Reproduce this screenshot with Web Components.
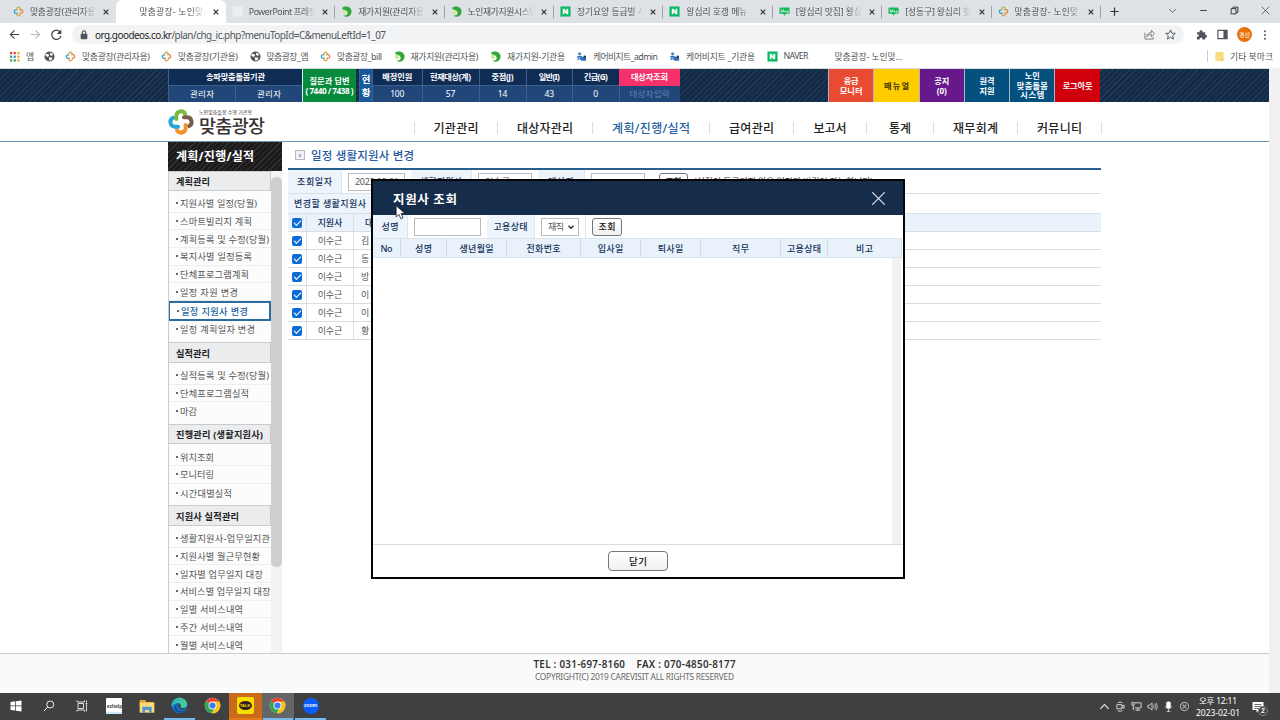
<!DOCTYPE html>
<html lang="ko">
<head>
<meta charset="utf-8">
<title>맞춤광장</title>
<style>
  html, body {
    margin: 0;
    height: 720px;
    overflow: hidden;
    background: #fff;
    font-family: "Noto Sans", "Noto Sans CJK KR", sans-serif;
    font-size: 9px;
    color: #333;
  }
</style>
</head>
<body>
<app-desktop></app-desktop>

<script>
// small base: every element gets an open root with its own styles
class Base extends HTMLElement {
  constructor() {
    super();
    this.attachShadow({ mode: "open" });
  }

  connectedCallback() {
    this.shadowRoot.innerHTML = `<style>* { box-sizing: border-box; }
      ${this.css()}</style>${this.html()}`;
  }

  css() { return ""; }
  html() { return "<slot></slot>"; }
}

// a single line of text, tracked so that it fills `w` pixels
class TextRun extends Base {
  css() {
    return `
      :host { display: block; flex: none; white-space: pre; }
      span { display: inline-block; }`;
  }
  html() { return "<span><slot></slot></span>"; }

  connectedCallback() {
    super.connectedCallback();
    const w = Number(this.getAttribute("w"));
    if (!w) return;
    const count = this.textContent.length;
    const span = this.shadowRoot.querySelector("span");
    const natural = span.getBoundingClientRect().width;
    this.style.width = `${w}px`;
    if (count > 1) span.style.letterSpacing = `${(w - natural) / (count - 1)}px`;
  }
}
customElements.define("text-run", TextRun);

const run = (text, w, cls = "") => `<text-run class="${cls}" w="${w}">${text}</text-run>`;

const chrome = `
  <circle cx="12" cy="12" r="11" fill="#fff"/>
  <path d="M12 12L2.5 6.5A11 11 0 0 1 21.5 6.5Z" fill="#e94335"/>
  <path d="M2.5 6.5A11 11 0 0 0 11 23L16.3 14.5 12 12Z" fill="#34a353"/>
  <path d="M21.5 6.5A11 11 0 0 1 11 23L16.5 14 12 6.5Z" fill="#fbc116"/>
  <circle cx="12" cy="12" r="5.6" fill="#fff"/><circle cx="12" cy="12" r="4.4" fill="#3b7ded"/>`;

const ring = (a, b, c, d, w = 3.2) => `<g fill="none" stroke-width="${w}" stroke-linecap="round">
  <path d="M8 9.500V6.500a4 4 0 0 1 7.500-1.500" stroke="${a}"/>
  <path d="M14.500 8h3a4 4 0 0 1 1.500 7.500" stroke="${b}"/>
  <path d="M16 14.500v3a4 4 0 0 1-7.500 1.500" stroke="${c}"/>
  <path d="M9.500 16H6.500a4 4 0 0 1-1.500-7.500" stroke="${d}"/></g>`;

const ICONS = {
  ring: ring("#b9b45a", "#dd8a4b", "#f0a035", "#36a3d9", 3),
  leaf: `<path d="M5 2C16-1 24 5 23 14 21 23 12 26 5 21c8 0 11-3 9-8C12 8 8 10 4 7 2 5 3 3 5 2Z" fill="#35a63a"/>
    <path d="M3 9c5-2 9 1 8 5-1 5-6 5-8 2-2-2-2-5 0-7Z" fill="#d5e8a0"/>`,
  n: `<rect x="1" y="1" width="22" height="22" fill="#08b865"/><path d="M6 18V6h4l4 6V6h4v12h-4l-4-6v6Z" fill="#fff"/>`,
  blog: `<path d="M3 3h18q2 0 2 2v10q0 2-2 2h-6l-3 4-3-4H3q-2 0-2-2V5q0-2 2-2Z" fill="#14b75a"/>
    <path d="M5 7v6M5 11h3v2H5M10 7v6M12.500 11h2.500v2h-2.500ZM17 11h3v4h-3" stroke="#fff" stroke-width="1.400" fill="none"/>`,
  blank: `<rect x="1" y="1" width="22" height="22" fill="#eceef0"/>`,
  globe: `<circle cx="12" cy="12" r="11" fill="#50555a"/><path d="M4 6l6 1 1 4-4 2-4-3ZM14 3l6 4-3 4-4-3ZM10 14l8 0-1 5-5 2Z" fill="#fff"/>`,
  care: `<circle cx="8" cy="6" r="3.500" fill="#4a86cc"/><path d="M1 13q7-5 14 0l7 2v6H12l-3-3-7 2 3-5Z" fill="#3372bd"/><circle cx="19" cy="13" r="3" fill="#263b62"/><path d="M4 13l6 1-2 4Z" fill="#87c6e8"/>`,
  apps: [0, 1, 2].map(y => [0, 1, 2].map(x =>
    `<rect x="${2 + x * 8}" y="${2 + y * 8}" width="5" height="5" fill="${["#e74535", "#e74535", "#f0ad28", "#43a255", "#4589e8", "#f0ad28", "#43a255", "#43a255", "#f0ad28"][y * 3 + x]}"/>`).join("")).join(""),
  close: `<path d="M5 5l14 14M19 5L5 19" stroke="#333" stroke-width="3.600"/>`,
  thinx: `<path d="M2 2l20 20M22 2L2 22" stroke="currentColor" stroke-width="1.800"/>`,
  plus: `<path d="M12 1v22M1 12h22" stroke="#333" stroke-width="3.200"/>`,
  down: `<path d="M3 8l9 9 9-9" stroke="#555" stroke-width="2.300" fill="none"/>`,
  pick: `<path d="M2 7l10 10L22 7" stroke="#222" stroke-width="5" fill="none"/>`,
  up: `<path d="M3 17l9-9 9 9" stroke="#ddd" stroke-width="2.600" fill="none"/>`,
  min: `<path d="M3 12h18" stroke="#333" stroke-width="2.400"/>`,
  restore: `<path d="M3 7h13v14H3ZM8 7V3h13v14h-5" stroke="#333" stroke-width="2.600" fill="none"/>`,
  back: `<path d="M22 12H4M12 3l-9 9 9 9" stroke="#444" stroke-width="2.500" fill="none"/>`,
  fwd: `<path d="M2 12h18M12 3l9 9-9 9" stroke="#b5b8bb" stroke-width="2.500" fill="none"/>`,
  reload: `<path d="M20 7a10 10 0 1 0 1.500 8" stroke="#444" stroke-width="2.700" fill="none"/><path d="M22.500 1v10h-10Z" fill="#444"/>`,
  lock: `<rect x="4" y="9" width="16" height="13" rx="2" fill="#50545a"/><path d="M8 10V6a4 4 0 0 1 8 0v4" fill="none" stroke="#50545a" stroke-width="2.600"/>`,
  share: `<path d="M2 8v14h18v-5" stroke="#777" stroke-width="2" fill="none"/><path d="M6 17q1-9 10-9V3l7 7-7 7v-5q-6-1-10 5Z" fill="none" stroke="#777" stroke-width="2"/>`,
  star: `<path d="M12 2l3 7 7.500.6-5.700 5 1.800 7.400L12 18l-6.600 4 1.800-7.400-5.700-5L9 9Z" fill="none" stroke="#50545a" stroke-width="2"/>`,
  puzzle: `<path d="M2 7h6c-2-6 8-6 6 0h6v6c5-2 5 7 0 6v4h-6c1-5-7-5-6 0H2v-6c5 1 5-7 0-5Z" fill="#50545a"/>`,
  panel: `<path d="M2 3h20v18H2Z" fill="none" stroke="#50545a" stroke-width="2.500"/><path d="M14 3h8v18h-8Z" fill="#50545a"/>`,
  dots: `<g fill="#50545a"><circle cx="12" cy="3" r="2.300"/><circle cx="12" cy="12" r="2.300"/><circle cx="12" cy="21" r="2.300"/></g>`,
  folder: `<path d="M3 2h18v20H3Z" fill="#f9dc7d"/><path d="M17 22v-5h4Z" fill="#e5b94a"/>`,
  logo: ring("#79b93d", "#795d4b", "#f19327", "#2ba4d5", 3.4),
  chrome,
  win: `<path d="M1 4l9-1.300V11H1ZM11.500 2.500L23 1v10H11.500ZM1 12.500h9V21L1 19.800ZM11.500 12.500H23V23l-11.500-1.600Z" fill="#fff"/>`,
  search: `<circle cx="14.500" cy="9" r="7" fill="none" stroke="#eee" stroke-width="2"/><path d="M9.500 14L2 22" stroke="#eee" stroke-width="2"/>`,
  task: `<path d="M4 7h11v10H4ZM2 1v3h15V1M2 23v-3h15v3M21 1v4M21 10v13" fill="none" stroke="#ddd" stroke-width="2"/><path d="M19.500 6h3v3h-3Z" fill="#fff"/>`,
  files: `<path d="M1 3h8l2 3h11v4H1Z" fill="#e8ab35"/><path d="M1 7h22v15H1Z" fill="#ffda76"/><path d="M5 13h14v9h-4v-4H9v4H5Z" fill="#4b98cf"/>`,
  edge: `<circle cx="12" cy="12" r="11" fill="#1276c8"/><path d="M1 10C3-2 21-2 23 10c0 6-8 7-10 4 3-4-2-8-7-5Q3 10 1 14Z" fill="#43c99b"/><path d="M1 10C3 3 11 2 15 6 8 3 3 7 1 14Z" fill="#249fd7"/><path d="M9 10c-4 8 3 13 12 8-4 7-18 5-16-4 1-2 2-3 4-4Z" fill="#0a4e98"/><path d="M10 10q5 0 3 4c2 3 6 2 9 0q-4 6-9 3-4-2-3-7Z" fill="#404040"/>`,
  video: `<path d="M4 8h11v9H4ZM15 11l5-2v7l-5-2M6 4q5-4 10 0M6 21q5 3 10 0" fill="none" stroke="#ddd" stroke-width="2"/>`,
  net: `<path d="M8 4h14v11H8M15 15v5M10 20h10M2 3h5v6H2ZM5 9v11" fill="none" stroke="#ddd" stroke-width="2"/>`,
  sound: `<path d="M2 9h4l5-5v16l-5-5H2Z" fill="none" stroke="#ddd" stroke-width="1.800"/><path d="M14 9q2 3 0 6M17 6q4 6 0 12M20 4q5 8 0 16" fill="none" stroke="#ddd" stroke-width="1.600"/>`,
  mic: `<rect x="7" y="1" width="10" height="15" rx="4" fill="#fff"/><path d="M4 12q8 10 16 0M12 17v6M8 23h8" fill="none" stroke="#ddd" stroke-width="1.800"/>`,
  stop: `<circle cx="12" cy="12" r="9" fill="none" stroke="#aaa" stroke-width="2.400"/><path d="M8 8l8 8M16 8l-8 8" stroke="#aaa" stroke-width="2.800"/>`,
  note: `<path d="M1 2h22v16h-9l-5 5v-5H1Z" fill="#fff"/><path d="M5 7h14M5 11h14M5 15h9" stroke="#444" stroke-width="1.600"/>`,
  arrow: `<path d="M5 1v18l4.500-4 3 7 3.500-1.500-3-7h6Z" fill="#fff" stroke="#222" stroke-width="1.300"/>`,
};

class UiIcon extends Base {
  css() {
    const size = this.getAttribute("size") || 11;
    return `:host { display: block; flex: none; width: ${size}px; height: ${size}px; }
      svg { display: block; width: 100%; height: 100%; }`;
  }
  html() { return `<svg viewBox="0 0 24 24">${ICONS[this.getAttribute("name")]}</svg>`; }
}
customElements.define("ui-icon", UiIcon);

const icon = (name, size = 11, cls = "") => `<ui-icon class="${cls}" name="${name}" size="${size}"></ui-icon>`;

class BrowserTab extends Base {
  css() {
    return `
      :host { display: flex; flex: none; align-items: center; width: 109.4px; height: 23px; padding: 0 6px 0 6px; position: relative; color: #50555a; }
      :host([active]) { background: #fff; border-radius: 6px 6px 0 0; }
      :host([line])::after { content: ""; position: absolute; right: 0; top: 6px; width: 1px; height: 12px; background: #9da1a6; }
      .label { margin-left: 6px; width: 66px; overflow: hidden; -webkit-mask-image: linear-gradient(90deg, #000 80%, transparent 100%); }
      .gap { width: 11px; }
      .x { margin-left: auto; }`;
  }
  html() {
    const name = this.getAttribute("icon");
    return `${name ? icon(name) : '<span class="gap"></span>'}
      <div class="label"><slot></slot></div>${icon("close", 8, "x")}`;
  }
}
customElements.define("browser-tab", BrowserTab);

class BrowserChrome extends Base {
  css() {
    return `
      :host { display: block; height: 68px; color: #50555a; font-size: 8.800px; }
      div { display: flex; align-items: center; }
      .tabs { height: 23px; background: #dee1e6; padding-left: 7px; }
      .plus { margin-left: 9px; }
      .win { margin-left: 49px; gap: 22px; color: #333; height: 20px; align-self: flex-start; }
      .bar { height: 23px; padding: 0 0 0 9px; }
      .bar > ui-icon { margin-right: 10px; }
      .url { flex: none; width: 1112px; height: 19px; background: #f1f3f4; border-radius: 9px; padding: 0 8px 0 7px; font-size: 9.900px; }
      .url .lock { margin-right: 6px; }
      .url b { font-weight: 400; color: #222; }
      .url .share { margin-left: auto; margin-right: 10px; }
      .bar .puz { margin: 0 10px 0 12px; }
      .bar .panel, .bar .more { margin-right: 0; }
      .me { flex: none; width: 15px; height: 15px; border-radius: 50%; background: #e8710a; color: #fff; font-size: 6px; justify-content: center; margin: 0 8px 0 9px; }
      .marks { height: 22px; padding: 0 0 2px 9px; }
      .mark { flex: none; gap: 6px; }
      .other { margin-left: auto; border-left: 1px solid #ccc; height: 12px; padding-left: 6px; margin-right: 7px; gap: 5px; }`;
  }
  html() {
    const tabs = [
      ["ring", "맞춤광장(관리자용)", 68], ["", "맞춤광장- 노인맞춤", 72, "active"], ["blank", "PowerPoint 프레젠", 68, "line"],
      ["leaf", "재가지원(관리자용", 66, "line"], ["leaf", "노인재가지원시스템", 70, "line"], ["n", "장기요양 등급별 서", 69, "line"],
      ["n", "왕십리 호갱 메뉴", 61, "line"], ["blog", "[왕십리 맛집] 왕십리", 74, "line"], ["blog", "[성동구] 왕십리 핫", 66, "line"],
      ["ring", "맞춤광장- 노인맞춤", 72, "line"],
    ];
    const marks = [
      ["apps", "앱", 7, 35], ["globe", "", 0, 21], ["ring", "맞춤광장(관리자용)", 68, 96], ["ring", "맞춤광장(기관용)", 60, 88.500],
      ["globe", "맞춤광장_앱", 42, 70.500], ["ring", "맞춤광장_bill", 45, 73.500], ["leaf", "재가지원(관리자용)", 68, 96.500],
      ["leaf", "재가지원-기관용", 58, 86], ["care", "케어비지트_admin", 65, 93], ["care", "케어비지트 _기관용", 69, 97.500],
      ["n", "NAVER", 25, 68], ["", "맞춤광장- 노인맞...", 68, 90],
    ];
    return `
      <div class="tabs">
        ${tabs.map(([i, t, w, a = ""]) => `<browser-tab icon="${i}" ${a}>${run(t, w)}</browser-tab>`).join("")}
        ${icon("plus", 9, "plus")}
        <div class="win">${["down", "min", "restore", "thinx"].map(n => icon(n, 9)).join("")}</div>
      </div>
      <div class="bar">
        ${icon("back")}${icon("fwd")}${icon("reload")}
        <div class="url">${icon("lock", 10, "lock")}${run("<b>org.goodeos.co.kr</b>/plan/chg_ic.php?menuTopId=C&amp;menuLeftId=1_07", 291)}${icon("share", 11, "share")}${icon("star")}</div>
        ${icon("puzzle", 11, "puz")}${icon("panel", 11, "panel")}<div class="me">경선</div>${icon("dots", 10, "more")}
      </div>
      <div class="marks">
        ${marks.map(([i, t, w, all]) => `<div class="mark" style="width:${all}px">${i ? icon(i) : ""}${t ? run(t, w) : ""}</div>`).join("")}
        <div class="other">${icon("folder", 11)}${run("기타 북마크", 43)}</div>
      </div>`;
  }
}
customElements.define("browser-chrome", BrowserChrome);

class StatusBar extends Base {
  css() {
    return `
      :host { display: flex; height: 34px; padding-left: 168px; border-top: 1px solid #d5dbe0; color: #fff; font-size: 8.200px; line-height: 10px;
        background: repeating-linear-gradient(135deg, #132b48 0 3px, #203a58 3px 4px); }
      .c { display: flex; align-items: center; justify-content: center; flex: none; border-left: 1px solid #3c5f8c; }
      .org, .stat { display: grid; grid-template-rows: 17px 16px; flex: none; }
      .org { width: 134px; grid-template-columns: 1fr 1fr; }
      .org .h { grid-column: span 2; }
      .h { background: #0f2c55; font-weight: 700; border-bottom: 1px solid #3c5f8c; }
      .v { background: #21477a; font-size: 8.500px; }
      .pink { background: #f5316b; border-color: #f5316b; }
      .dim { color: #6482a8; }
      .qa { width: 54px; background: #078a3c; flex-direction: column; font-weight: 700; margin-right: 3px; border-color: #cfe; }
      .now { width: 13px; background: #17599b; flex-direction: column; font-weight: 700; font-size: 9.500px; line-height: 13px; }
      .links { display: flex; margin-left: 148.500px; }
      .links .c { width: 45.300px; flex-direction: column; font-weight: 700; border-color: #a9b6c4; line-height: 9.500px; }
      .links .c:nth-child(2) { color: #3b3000; }`;
  }
  html() {
    const stats = [["배정인원", 30, 49.500, 100, 14], ["현재대상(계)", 41, 57, 57, 9.500], ["중점(J)", 22, 47, 14, 9.500], ["일반(I)", 21, 46.500, 43, 9.500], ["긴급(G)", 24, 46.500, 0, 5]];
    const links = [
      ["#e94b32", ["응급", 15], ["모니터", 23]], ["#ffcc00", ["매뉴얼", 25]], ["#67188a", ["공지", 15], ["(0)", 10]],
      ["#04507f", ["원격", 15], ["지원", 15]], ["#04507f", ["노인", 15], ["맞춤돌봄", 31], ["시스템", 24]], ["#d0000d", ["로그아웃", 30]],
    ];
    return `
      <div class="org"><div class="c h">${run("송파맞춤돌봄기관", 59)}</div><div class="c v">${run("관리자", 24)}</div><div class="c v">${run("관리자", 24)}</div></div>
      <div class="c qa">${run("질문과 답변", 40)}${run("( 7440 / 7438 )", 48)}</div>
      <div class="c now"><span>현</span><span>황</span></div>
      ${stats.map(([h, hw, w, v, vw]) => `<div class="stat" style="width:${w}px"><div class="c h">${run(h, hw)}</div><div class="c v">${run(v, vw)}</div></div>`).join("")}
      <div class="stat" style="width:61px"><div class="c h pink">${run("대상자조회", 37)}</div><div class="c v dim">${run("대상자입력", 40)}</div></div>
      <div class="links">${links.map(([bg, ...t]) => `<div class="c" style="background:${bg}">${t.map(a => run(...a)).join("")}</div>`).join("")}</div>`;
  }
}
customElements.define("status-bar", StatusBar);

class SiteHeader extends Base {
  css() {
    return `
      :host { display: flex; height: 40px; padding-left: 168px; border-bottom: 1px solid #6493b6; }
      .logo { display: flex; width: 246px; padding-top: 6px; gap: 3px; color: #3a3335; }
      .logo ui-icon { margin-left: -1px; margin-right: 1px; }
      .logo small { display: block; font-size: 5px; line-height: 8px; }
      .logo strong { display: block; font-size: 18.500px; line-height: 20px; font-weight: 500; }
      nav { display: flex; align-items: center; padding-top: 12px; }
      nav div { display: flex; align-items: center; justify-content: center; height: 12px; border-left: 1px solid #ddd; font-size: 12px; font-weight: 500; color: #222; }
      nav .on { color: #24619f; }`;
  }
  html() {
    const items = [["기관관리", 45, 83], ["대상자관리", 56, 95], ["계획/진행/실적", 78, 117, "on"], ["급여관리", 45, 84], ["보고서", 33, 73], ["통계", 22, 67], ["재무회계", 45, 84], ["커뮤니티", 45, 84], ["", 0, 1]];
    return `
      <div class="logo">${icon("logo", 28)}<div><small>${run("노인맞춤돌봄 수행 기관용", 53)}</small><strong>${run("맞춤광장", 66)}</strong></div></div>
      <nav>${items.map(([t, w, all, c = ""]) => `<div class="${c}" style="width:${all}px">${run(t, w)}</div>`).join("")}</nav>`;
  }
}
customElements.define("site-header", SiteHeader);

class SideMenu extends Base {
  css() {
    return `
      :host { display: block; width: 114px; height: 512px; overflow: hidden; }
      h2 { margin: 0; height: 28.500px; display: flex; align-items: center; padding-left: 8px; color: #fff; font-size: 12px;
        background: repeating-linear-gradient(135deg, #1c1a1b 0 3px, #343233 3px 4px); }
      .body { display: flex; height: 484px; overflow: hidden; }
      .list { width: 103px; flex: none; border-left: 1px solid #ccc; overflow: hidden; background: #fcfcfc; }
      h3 { margin: 0; height: 20.500px; display: flex; align-items: center; padding-left: 7px; background: #ebecee; border: solid #c9cbce; border-width: 1px 1px 1px 0; font-size: 9.200px; color: #222; }
      ul { margin: 0; padding: 4px 0; list-style: none; }
      li { display: flex; align-items: center; height: 17.700px; padding-left: 7px; border-bottom: 1px solid #eee; color: #555; font-size: 9.200px; }
      li:last-child { border: 0; }
      li::before { content: ""; width: 2px; height: 2px; background: #666; margin-right: 2px; flex: none; }
      li.on { height: 19.500px; border: 2px solid #2b6c9c; margin-left: -1px; padding-left: 7px; background: #fff; color: #1d5f9e; font-weight: 500; }
      .track { width: 11px; background: #f3f3f3; padding-top: 6px; }
      .thumb { height: 390px; border-radius: 5px; background: #cfcfcf; }`;
  }
  html() {
    const groups = [
      ["계획관리", 34, [["지원사별 일정(당월)", 77], ["스마트빌리지 계획", 72], ["계획등록 및 수정(당월)", 89], ["복지사별 일정등록", 72], ["단체프로그램계획", 69], ["일정 자원 변경", 58], ["일정 지원사 변경", 67, "on"], ["일정 계획일자 변경", 75]]],
      ["실적관리", 34, [["실적등록 및 수정(당월)", 89], ["단체프로그램실적", 69], ["마감", 17]]],
      ["진행관리 (생활지원사)", 87, [["위치조회", 34], ["모니터링", 34], ["시간대별실적", 52]]],
      ["지원사 실적관리", 63, [["생활지원사-업무일지관", 90], ["지원사별 월근무현황", 80], ["일자별 업무일지 대장", 83], ["서비스별 업무일지 대장", 90.500], ["일별 서비스내역", 63], ["주간 서비스내역", 63], ["월별 서비스내역", 63]]],
    ];
    return `<h2>${run("계획/진행/실적", 78)}</h2>
      <div class="body"><div class="list">
        ${groups.map(([t, w, items]) => `<h3>${run(t, w)}</h3><ul>${items.map(([s, sw, c = ""]) => `<li class="${c}">${run(s, sw)}</li>`).join("")}</ul>`).join("")}
      </div><div class="track"><div class="thumb"></div></div></div>`;
  }
}
customElements.define("side-menu", SideMenu);

const FIELDS = `
  .field { display: flex; align-items: center; border: 1px solid #bbb; background: #fff; height: 18px; padding: 0 6px; flex: none; font-size: 9px; color: #555; }
  .label { display: flex; align-items: center; justify-content: center; align-self: stretch; flex: none; background: #eef4fb; border-right: 1px solid #dde5ee; color: #14305a; font-weight: 500; }
  .btn { display: flex; align-items: center; justify-content: center; height: 18px; flex: none; border: 1px solid #777; border-radius: 3px; background: linear-gradient(#fff, #f1f1f1); color: #111; font-weight: 500; }`;

class SchedulePage extends Base {
  css() {
    return `${FIELDS}
      :host { display: block; width: 813px; margin-left: 6px; }
      h1 { display: flex; align-items: center; gap: 6px; margin: 0; height: 28px; padding-left: 7px; border-bottom: 2px solid #285f8d; font-size: 11.500px; font-weight: 500; color: #2659a0; }
      h1 i { display: flex; align-items: center; justify-content: center; width: 10px; height: 10px; border: 1px solid #b5b8c8; background: #f1f2f8; font: 700 7px "Liberation Sans", sans-serif; color: #55608a; }
      .filter { display: flex; align-items: center; height: 24px; border-bottom: 1px solid #d9e0e8; gap: 6px; }
      .sub { display: flex; height: 20px; border-bottom: 1px solid #d9e0e8; }
      .row { display: grid; grid-template-columns: 19px 47px 54px 412px 1fr; height: 18px; border-bottom: 1px solid #ddd; color: #555; }
      .row > div { display: flex; align-items: center; justify-content: center; border-right: 1px solid #ddd; }
      .row > div:last-child { border: 0; padding-right: 0; }
      .row > div:nth-child(3) { justify-content: flex-start; padding-left: 7px; }
      .head { background: #eaf3fb; color: #14305a; font-weight: 500; }
      .head.row > div:nth-child(3) { padding-left: 11px; }
      .head .last { margin-right: 168px; }
      input { appearance: none; margin: 0; width: 10px; height: 10px; border-radius: 2px; background: #0b6cd8; display: grid; place-items: center; }
      input::after { content: ""; width: 6px; height: 3px; border: solid #fff; border-width: 0 0 1.500px 1.500px; transform: translateY(-1px) rotate(-45deg); }`;
  }
  html() {
    const row = (a, b, last, cls = "") => `<div class="row ${cls}"><div><input type="checkbox" checked></div><div>${run(a, 24.500)}</div><div>${run(b, 8)}</div><div></div><div>${last}</div></div>`;
    return `
      <h1><i>›</i>${run("일정 생활지원사 변경", 103)}</h1>
      <div class="filter">
        <div class="label" style="width:54px">${run("조회일자", 35)}</div><div class="field" style="width:57px">${run("2023-02-01", 44)}</div>
        <div class="label" style="width:61px">${run("생활지원사", 42)}</div><div class="field" style="width:54px">${run("이수근", 25)}</div>
        <div class="label" style="width:47px">${run("대상자", 26)}</div><div class="field" style="width:54px"></div>
        <span style="width:2px"></span><div class="btn" style="width:29px">${run("조회", 16)}</div>${run("(실적이 등록되지 않은 일정만 변경이 가능합니다)", 179)}
      </div>
      <div class="sub"><div class="label" style="width:85px">${run("변경할 생활지원사", 72)}</div></div>
      ${row("지원사", "대", '<span class="last">비고</span>', "head")}
      ${["김", "동", "방", "이", "이", "황"].map(n => row("이수근", n, "")).join("")}`;
  }
}
customElements.define("schedule-page", SchedulePage);

class HelperDialog extends Base {
  css() {
    return `${FIELDS}
      :host { position: absolute; left: 371px; top: 179px; width: 534px; height: 400px; border: 2px solid #050505; background: #fff; display: flex; flex-direction: column; }
      header { display: flex; align-items: center; justify-content: space-between; flex: none; height: 34px; background: #152c4a; color: #fff; padding: 0 17px 0 20px; font-size: 12.500px; font-weight: 700; }
      header ui-icon { color: #cfd6df; }
      .filter { display: flex; align-items: center; height: 23px; flex: none; gap: 6px; }
      .head { display: grid; grid-template-columns: 28px 46px 60px 74px 60px 60px 80px 47px 1fr; height: 20px; flex: none; margin-right: 1px; background: #e9f2fb; border: solid #dce4ec; border-width: 1px 0; color: #14305a; font-weight: 500; }
      .head div { display: flex; align-items: center; justify-content: center; border-right: 1px solid #d3dce6; }
      .body { display: flex; flex: 1; justify-content: flex-end; }
      .body i { width: 9px; margin-right: 2px; background: #f2f2f2; }
      footer { display: flex; align-items: center; justify-content: center; height: 33px; flex: none; border-top: 1px solid #ddd; }
      footer .btn { width: 60px; height: 20px; border-radius: 4px; font-size: 9.500px; }`;
  }
  html() {
    const cols = [["No", 12], ["성명", 17], ["생년월일", 34], ["전화번호", 34], ["입사일", 25.500], ["퇴사일", 25.500], ["직무", 17], ["고용상태", 34], ["비고", 17]];
    return `
      <header>${run("지원사 조회", 64)}${icon("thinx", 15)}</header>
      <div class="filter">
        <div class="label" style="width:35px">${run("성명", 17)}</div><div class="field" style="width:67px"></div>
        <div class="label" style="width:48px">${run("고용상태", 34)}</div><div class="field" style="width:38px;padding:0 3px 0 6px;gap:4px">${run("재직", 16)}${icon("pick", 6)}</div>
        <div class="label" style="width:1px"></div><div class="btn" style="width:30px">${run("조회", 17)}</div>
      </div>
      <div class="head">${cols.map(c => `<div>${run(...c)}</div>`).join("")}</div>
      <div class="body"><i></i></div>
      <footer><div class="btn">${run("닫기", 18)}</div></footer>`;
  }
}
customElements.define("helper-dialog", HelperDialog);

class SiteFooter extends Base {
  css() {
    return `
      :host { display: flex; flex-direction: column; align-items: center; height: 40px; padding-top: 4px; background: #fafafa; border-top: 1px solid #ccc; }
      .tel { font-size: 9.800px; font-weight: 600; line-height: 13px; }
      .copy { font-size: 8.300px; line-height: 12px; color: #666; }`;
  }
  html() {
    return `${run("TEL : 031-697-8160    FAX : 070-4850-8177", 202, "tel")}${run("COPYRIGHT(C) 2019 CAREVISIT ALL RIGHTS RESERVED", 199, "copy")}`;
  }
}
customElements.define("site-footer", SiteFooter);

class TaskBar extends Base {
  css() {
    return `
      :host { display: flex; height: 27px; background: #404040; color: #fff; font-size: 8.500px; }
      .tile { display: flex; align-items: center; justify-content: center; width: 32.700px; border-bottom: 2px solid transparent; }
      .run { border-image: linear-gradient(90deg, transparent 10%, #76b9ed 10% 90%, transparent 90%) 2; }
      .talk { background: #c96a1c; border-color: #e97816; }
      .cur { background: #656565; }
      .ez { width: 16px; height: 16px; background: #fff; color: #344; font: 700 5px/16px "Liberation Sans", sans-serif; text-align: center; border-radius: 1px; box-shadow: inset 0 -2px #cde7f5; }
      .kakao { width: 17px; height: 17px; background: #f9df00; border-radius: 2px; display: grid; place-items: center; }
      .kakao span { width: 13px; height: 9px; border-radius: 50%; background: #371d1e; color: #f9df00; font: 700 4px/9px "Liberation Sans", sans-serif; text-align: center; }
      .zoom { width: 16px; height: 16px; border-radius: 50%; background: #0b5cff; font: 700 5px/15px "Liberation Sans", sans-serif; text-align: center; }
      .tray { display: flex; align-items: center; margin-left: auto; gap: 5px; }
      .time { width: 46px; display: flex; flex-direction: column; align-items: center; line-height: 12px; padding-top: 1px; }
      .note { position: relative; margin: 0 16px 0 6px; }
      .note b { position: absolute; left: 6px; top: 5px; width: 10px; height: 10px; border-radius: 50%; background: #404040; border: 1px solid #888; font: 700 7px/8px "Liberation Sans", sans-serif; text-align: center; }`;
  }
  html() {
    return `
      <div class="tile">${icon("win", 12)}</div><div class="tile">${icon("search", 12)}</div><div class="tile">${icon("task", 12)}</div>
      <div class="tile"><span class="ez">ezhelp</span></div><div class="tile">${icon("files", 16)}</div><div class="tile run">${icon("edge", 17)}</div>
      <div class="tile">${icon("chrome", 17)}</div><div class="tile talk"><div class="kakao"><span>TALK</span></div></div>
      <div class="tile cur run">${icon("chrome", 17)}</div><div class="tile run"><span class="zoom">zoom</span></div>
      <div class="tray">
        ${["up", "video", "net", "sound", "mic", "stop"].map(n => icon(n, 11)).join("")}
        <div class="time">${run("오후 12:11", 38)}${run("2023-02-01", 44)}</div>
        <div class="note">${icon("note", 12)}<b>2</b></div>
      </div>`;
  }
}
customElements.define("task-bar", TaskBar);

class AppDesktop extends Base {
  css() {
    return `
      :host { display: flex; flex-direction: column; width: 1280px; height: 720px; position: relative; overflow: hidden; }
      .view { display: flex; height: 625px; }
      .page { width: 1269px; }
      .main { display: flex; height: 511px; overflow: hidden; }
      .scroll { width: 11px; background: #f1f1f1; }
      .cursor { position: absolute; left: 393px; top: 205px; }`;
  }
  html() {
    return `<browser-chrome></browser-chrome>
      <div class="view"><div class="page">
        <status-bar></status-bar><site-header></site-header>
        <div class="main"><side-menu style="margin-left:168px"></side-menu><schedule-page></schedule-page></div>
        <site-footer></site-footer>
      </div><div class="scroll"></div></div>
      <task-bar></task-bar><helper-dialog></helper-dialog>${icon("arrow", 15, "cursor")}`;
  }
}
customElements.define("app-desktop", AppDesktop);
</script>
</body>
</html>
